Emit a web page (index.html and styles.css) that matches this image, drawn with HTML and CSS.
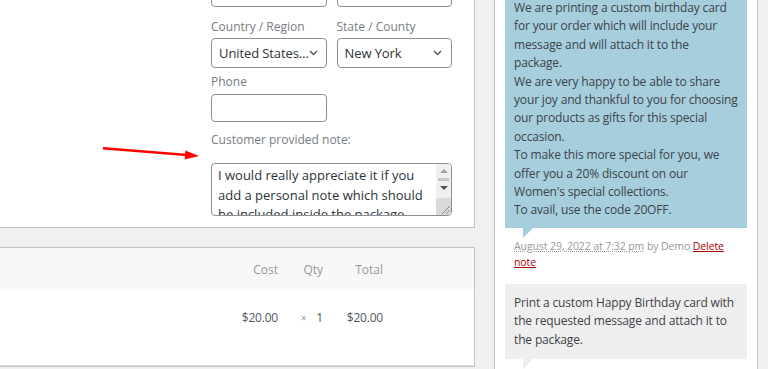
FILE: index.html
```html
<!DOCTYPE html>
<html lang="en">
<head>
<meta charset="utf-8">
<title>Edit order</title>
<link rel="stylesheet" href="styles.css">
</head>
<body>
<div class="screen">
  <main class="main">
    <section class="panel order-data">
      <div class="fields">
        <div class="pair">
          <span class="input"></span>
          <span class="input"></span>
        </div>
        <div class="pair pair-gap">
          <div class="field">
            <label class="lbl">Country / Region</label>
            <div class="select"><span>United States…</span>
              <svg class="chev" width="9" height="6" viewBox="0 0 9 6"><path d="M1 1l3.5 3.5L8 1" fill="none" stroke="#50575e" stroke-width="1.4"/></svg>
            </div>
          </div>
          <div class="field">
            <label class="lbl">State / County</label>
            <div class="select"><span>New York</span>
              <svg class="chev" width="9" height="6" viewBox="0 0 9 6"><path d="M1 1l3.5 3.5L8 1" fill="none" stroke="#50575e" stroke-width="1.4"/></svg>
            </div>
          </div>
        </div>
        <div class="field phone">
          <label class="lbl">Phone</label>
          <span class="input"></span>
        </div>
        <div class="field note-field">
          <label class="lbl">Customer provided note:</label>
          <div class="textarea">
            <div class="textarea-text">I would really appreciate it if you add a personal note which should be included inside the package.</div>
            <div class="scrollbar">
              <div class="sb-btn"><span class="tri-up"></span></div>
              <div class="sb-thumb"></div>
              <div class="sb-btn"><span class="tri-down"></span></div>
              <div class="sb-track"><span class="grip"></span></div>
            </div>
          </div>
        </div>
      </div>
      <svg class="pointer" width="110" height="20" viewBox="0 0 110 20">
        <line x1="2" y1="3.3" x2="86" y2="10" stroke="#ff0000" stroke-width="2.6"/>
        <polygon points="84.4,5.4 98,11 83.7,14.4" fill="#ff0000"/>
      </svg>
    </section>

    <section class="panel items">
      <div class="items-grid items-head">
        <span></span><span>Cost</span><span>Qty</span><span>Total</span><span></span>
      </div>
      <div class="items-grid items-row">
        <span></span><span>$20.00</span><span><small class="times">×</small>1</span><span>$20.00</span><span></span>
      </div>
    </section>
  </main>

  <aside class="sidebar">
    <ul class="notes">
      <li class="note customer">
        <div class="note-content">We are printing a custom birthday card<br>for your order which will include your<br>message and will attach it to the<br>package.<br>We are very happy to be able to share<br>your joy and thankful to you for choosing<br>our products as gifts for this special<br>occasion.<br>To make this more special for you, we<br>offer you a 20% discount on our<br>Women's special collections.<br>To avail, use the code 20OFF.</div>
        <p class="meta"><abbr class="date">August 29, 2022 at 7:32 pm</abbr> by Demo <a class="delete" href="#">Delete note</a></p>
      </li>
      <li class="note">
        <div class="note-content">Print a custom Happy Birthday card with<br>the requested message and attach it to<br>the package.</div>
      </li>
    </ul>
  </aside>
</div>
</body>
</html>
```

FILE: styles.css
```css
html, body {
  margin: 0;
  height: 100%;
}
body {
  background: #f0f0f1;
  font-family: "Open Sans", "Noto Sans", sans-serif;
  color: #3c434a;
  overflow: hidden;
}
.screen {
  display: flex;
  align-items: flex-start;
  margin-top: -40px;
}
.main {
  width: 475px;
  flex: none;
}
.panel {
  background: #fff;
  border: 1px solid #c3c4c7;
  border-left: 0;
}
.order-data {
  position: relative;
  padding: 16px 0 11px;
}
.fields {
  margin-left: 211px;
  width: 241px;
  display: flex;
  flex-direction: column;
}
.pair {
  display: flex;
  gap: 10px;
}
.pair > * {
  flex: 1;
  min-width: 0;
}
.pair-gap {
  margin-top: 11px;
}
.field {
  display: flex;
  flex-direction: column;
}
.input {
  display: block;
  height: 30px;
  box-sizing: border-box;
  border: 1px solid #8c8f94;
  border-radius: 4px;
  background: #fff;
}
.lbl {
  display: block;
  font-size: 12px;
  line-height: 18px;
  color: #787c82;
}
.select {
  margin-top: 2px;
  height: 30px;
  box-sizing: border-box;
  border: 1px solid #8c8f94;
  border-radius: 4px;
  display: flex;
  align-items: center;
  justify-content: space-between;
  padding: 0 9px 0 7px;
  font-size: 13px;
  letter-spacing: -0.1px;
  color: #2c3338;
  white-space: nowrap;
}
.chev {
  flex: none;
}
.phone {
  margin-top: 5px;
}
.phone .input {
  margin-top: 3px;
  width: 116px;
  height: 28px;
}
.note-field {
  margin-top: 9px;
}
.textarea {
  margin-top: 14px;
  height: 53px;
  box-sizing: border-box;
  border: 1px solid #8c8f94;
  border-radius: 4px;
  display: flex;
  overflow: hidden;
}
.textarea-text {
  flex: 1;
  padding: 2px 6px;
  font-size: 13px;
  line-height: 19.5px;
  color: #2c3338;
  overflow: hidden;
}
.scrollbar {
  width: 15px;
  flex: none;
  display: flex;
  flex-direction: column;
  background: #f0f0f0;
}
.sb-btn {
  height: 14px;
  display: flex;
  align-items: center;
  justify-content: center;
}
.tri-up {
  width: 0;
  height: 0;
  border-left: 4px solid transparent;
  border-right: 4px solid transparent;
  border-bottom: 4px solid #a3a3a3;
}
.tri-down {
  width: 0;
  height: 0;
  border-left: 4px solid transparent;
  border-right: 4px solid transparent;
  border-top: 4px solid #505050;
}
.sb-thumb {
  height: 3px;
  margin: 0 2px;
  background: #c8c8c8;
}
.sb-track {
  flex: 1;
  margin-top: 3px;
  background: #dadada;
  position: relative;
}
.grip {
  position: absolute;
  right: 1px;
  bottom: 1px;
  width: 8px;
  height: 8px;
  background: linear-gradient(135deg, transparent 45%, #8a8a8a 45%, #8a8a8a 55%, transparent 55%, transparent 70%, #8a8a8a 70%, #8a8a8a 80%, transparent 80%);
}
.pointer {
  position: absolute;
  left: 101px;
  top: 184px;
}
.items {
  margin-top: 19px;
}
.items-grid {
  display: grid;
  grid-template-columns: 1fr 60px 45px 60px 91px;
  text-align: right;
  font-size: 12px;
}
.items-head {
  height: 42px;
  align-items: center;
  background: #f8f8f8;
  color: #999;
}
.items-row {
  height: 76px;
  box-sizing: border-box;
  padding-top: 19px;
  line-height: 18px;
  border-bottom: 1px solid #dcdcde;
  color: #50575e;
  letter-spacing: -0.2px;
}
.times {
  font-size: 10px;
  color: #999;
  margin-right: 10px;
}
.sidebar {
  margin-left: 19px;
  width: 264px;
  flex: none;
  box-sizing: border-box;
  background: #fff;
  border: 1px solid #c3c4c7;
  padding: 28px 10px 0;
  min-height: 480px;
}
.notes {
  list-style: none;
  margin: 0;
  padding: 0;
}
.note {
  margin: 0 0 4px;
}
.note-content {
  position: relative;
  background: #efefef;
  padding: 10px 6px 10px 9px;
  font-size: 12px;
  letter-spacing: -0.15px;
  line-height: 18.4px;
  color: #3c434a;
  white-space: nowrap;
}
.note-content::after {
  content: "";
  position: absolute;
  left: 18px;
  bottom: -10px;
  border-style: solid;
  border-width: 10px 10px 0 0;
  border-color: #efefef transparent transparent transparent;
}
.customer .note-content {
  background: #a7cedc;
  padding-bottom: 8px;
}
.customer .note-content::after {
  border-top-color: #a7cedc;
}
.meta {
  margin: 0;
  padding: 10px 9px;
  font-size: 10.5px;
  line-height: 16px;
  letter-spacing: -0.1px;
  color: #999;
}
.date {
  text-decoration: underline dotted;
}
.delete {
  color: #a00;
  text-decoration: underline;
}
```
